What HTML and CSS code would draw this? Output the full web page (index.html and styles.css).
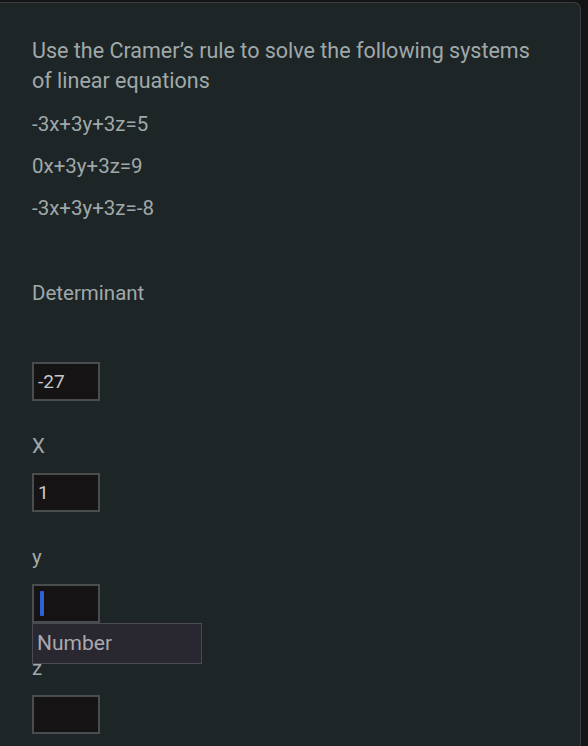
FILE: index.html
```html
<!DOCTYPE html>
<html lang="en">
<head>
    <meta charset="UTF-8">
    <meta name="viewport" content="width=device-width, initial-scale=1.0">
    <title>Cramer's rule</title>
    <link rel="stylesheet" href="styles.css">
</head>
<body>
    <div class="card">
        <p class="question">Use the Cramer’s rule to solve the following systems of linear equations</p>
        <p class="eq">-3x+3y+3z=5</p>
        <p class="eq">0x+3y+3z=9</p>
        <p class="eq">-3x+3y+3z=-8</p>

        <p class="label first">Determinant</p>
        <div class="answer"><span class="value">-27</span></div>

        <p class="label">X</p>
        <div class="answer"><span class="value">1</span></div>

        <p class="label">y</p>
        <div class="answer active">
            <span class="caret"></span>
            <div class="tooltip">Number</div>
        </div>

        <p class="label">z</p>
        <div class="answer"></div>
    </div>
</body>
</html>
```

FILE: styles.css
```css
body {
    margin: 0;
    padding: 0;
    background-color: #141414;
    font-family: Roboto, "Noto Sans", sans-serif;
    color: #a0a9a9;
    overflow: hidden;
    height: 746px;
}

.card {
    box-sizing: border-box;
    margin: 2px 7px 0 -2px;
    padding: 33px 0 0 33px;
    background-color: #1e2527;
    border: 1px solid #3a3f41;
    border-bottom: none;
    border-radius: 0 7px 0 0;
    height: 744px;
    overflow: hidden;
}

p {
    margin: 0;
}

.question {
    font-size: 21.5px;
    line-height: 30px;
    width: 500px;
    margin-bottom: 13px;
}

.eq {
    font-size: 20.5px;
    line-height: 30px;
    margin-bottom: 12px;
}

.label {
    font-size: 20.5px;
    line-height: 30px;
    margin-top: 30px;
    margin-bottom: 12px;
}

.label.first {
    margin-top: 55px;
    margin-bottom: 54px;
}

.answer {
    position: relative;
    box-sizing: border-box;
    width: 68px;
    height: 39px;
    background-color: #151313;
    border: 2px solid #4a4d4e;
    display: flex;
    align-items: center;
    padding-left: 4px;
}

.value {
    font-size: 19px;
    color: #c9c9c9;
}

.caret {
    display: block;
    width: 4px;
    height: 25px;
    background-color: #2b64d9;
    border-radius: 1px;
    margin-left: 2px;
}

.tooltip {
    position: absolute;
    left: -2px;
    top: 37px;
    box-sizing: border-box;
    width: 170px;
    height: 41px;
    padding-left: 4px;
    background-color: #29272f;
    border: 1px solid #4b4a52;
    color: #a9a8af;
    font-size: 21px;
    line-height: 38px;
    z-index: 2;
}
```
